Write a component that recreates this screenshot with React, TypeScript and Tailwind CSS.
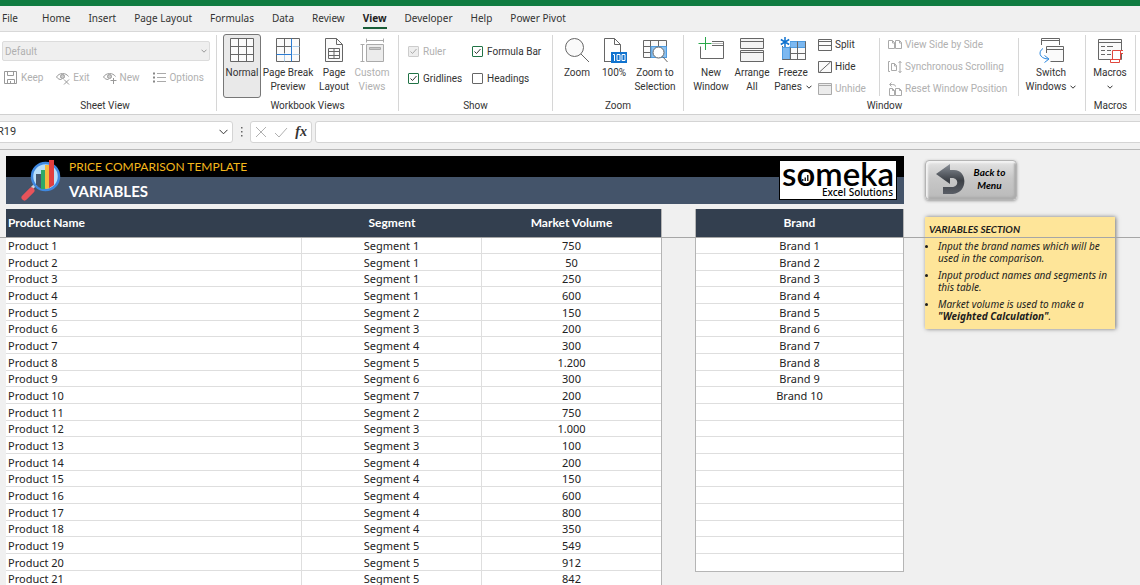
import React, { useState } from 'react';
import clsx from 'clsx';

const TABS = ['File', 'Home', 'Insert', 'Page Layout', 'Formulas', 'Data', 'Review', 'View', 'Developer', 'Help', 'Power Pivot'];

const PRODUCTS: [segment: number, volume: string][] = [
  [1, '750'], [1, '50'], [1, '250'], [1, '600'], [2, '150'], [3, '200'], [4, '300'],
  [5, '1.200'], [6, '300'], [7, '200'], [2, '750'], [3, '1.000'], [3, '100'], [4, '200'],
  [4, '150'], [4, '600'], [4, '800'], [4, '350'], [5, '549'], [5, '912'], [5, '842'],
];

const BRAND_ROWS = 20;
const BRANDS = Array.from({ length: 10 }, (_, i) => `Brand ${i + 1}`);

/* ── Icons ── */

function Icon({ w = 26, h = 26, children, className }: { w?: number; h?: number; children: React.ReactNode; className?: string }) {
  return (
    <svg width={w} height={h} viewBox={`0 0 ${w} ${h}`} fill="none" stroke="#666" className={clsx('shrink-0', className)} aria-hidden="true">
      {children}
    </svg>
  );
}

const Chevron = ({ className }: { className?: string }) => (
  <svg width="6" height="4" viewBox="0 0 6 4" fill="none" stroke="currentColor" className={clsx('inline-block', className)} aria-hidden="true">
    <path d="M.5.7 3 3.2 5.5.7" />
  </svg>
);

const NormalIcon = () => (
  <Icon>
    <path d="M1.5 1.5h23v23h-23zM9.5 1.5v23M17.5 1.5v23M1.5 9.5h23M1.5 17.5h23" fill="#fafafa" />
  </Icon>
);

const PageBreakIcon = () => (
  <Icon>
    <path d="M1.5 1.5h23v23h-23zM9.5 1.5v15M1.5 9.5h15" fill="#fafafa" />
    <path d="M17.5 9.5h7M17.5 17.5h7M9.5 17.5v7" stroke="#a9c9e6" />
    <path d="M16.5 1.5v23M1.5 17.5h15" stroke="#2b7cd3" />
  </Icon>
);

const PageLayoutIcon = () => (
  <Icon>
    <path d="M4.5 1.5h11l6 6v17h-17z" fill="#fafafa" />
    <path d="M15.5 1.5v6h6M7.5 11.5h11v10h-11zM7.5 14.5h11M7.5 18.5h11M13 11.5v10" />
  </Icon>
);

const CustomViewsIcon = () => (
  <Icon>
    <g stroke="#aaa">
      <path d="M7.5 7.5h17v17h-17z" fill="#ececec" />
      <path d="M10.5 10.5h11v2h-11z" fill="#c8c8c8" />
      <path d="M7.5 3.5h17M7.5 1.5v4M24.5 1.5v4M3.5 7.5v17M1.5 7.5h4M1.5 24.5h4" />
    </g>
  </Icon>
);

const ZoomIcon = () => (
  <Icon>
    <circle cx="10.5" cy="10.5" r="9" fill="#fafafa" />
    <path d="m17 17 8 8" />
  </Icon>
);

const Zoom100Icon = () => (
  <Icon>
    <path d="M3.5 25V1.5h10l6 6V15M3.5 24.5h7M13.5 1.5v6h6" />
    <rect x="10" y="15" width="16" height="11" fill="#1073cf" stroke="none" />
    <path d="M12 17.5h1.5v6.5M16 17.5h3v6h-3zM21 17.5h3v6h-3z" stroke="#fff" />
  </Icon>
);

const ZoomSelectionIcon = () => (
  <Icon>
    <path d="M1.5 3.5h23v17h-23zM8.5 3.5v17M16.5 3.5v17M1.5 9.5h23M1.5 15.5h23" fill="#fafafa" />
    <path d="M9 9.5h15.5v11H9z" fill="#8cc1f0" stroke="#4d9be0" />
    <circle cx="16.5" cy="15.5" r="5.5" fill="#fff" />
    <path d="m20.5 19.5 5 5.5" />
  </Icon>
);

const NewWindowIcon = () => (
  <Icon>
    <path d="M2.5 9.5v12h23v-17H14M14 8.5h11.5" />
    <path d="M14 6.5h11" stroke="#bbb" />
    <path d="M7.5 0v13M.5 6.5h13" stroke="#2aa84a" />
  </Icon>
);

const ArrangeIcon = () => (
  <Icon>
    <path d="M1.5 1.5h23v10h-23zM1.5 13.5h23v11h-23z" fill="#f4f4f4" />
    <path d="M1.5 4.5h23M1.5 15.5h23" />
  </Icon>
);

const FreezeIcon = () => (
  <Icon>
    <path d="M2.5 4.5h23v18h-23z" fill="#fafafa" />
    <path d="M10 4.5h15.5v6H10zM2.5 10.5H10v12H2.5z" fill="#7cb8f0" stroke="#4d9be0" />
    <path d="M10.5 10.5v12M17.5 4.5v18M10.5 16.5h15M2.5 22.5h23V4.5" />
    <path d="M0 0h10v9H0z" fill="#fff" stroke="none" />
    <path d="M5 0v10M.8 2.5l8.4 5M9.2 2.5l-8.4 5" stroke="#1073cf" strokeWidth="1.5" />
  </Icon>
);

const SwitchIcon = () => (
  <Icon>
    <path d="M3.5 8V1.5h18V8M3.5 3.5h18" />
    <path d="M8.5 9.5h17v15h-17z" fill="#fafafa" stroke="none" />
    <path d="M8.5 16V9.5h17v15h-13M8.5 12.5h17" />
    <path d="M5 11.5c-5 3-4 10 5 10.5M6.5 18.5 11 22l-4.5 3.5" stroke="#2b88e0" />
  </Icon>
);

const MacrosIcon = () => (
  <Icon>
    <path d="M1.5 2.5h23v20h-23z" fill="#fafafa" />
    <path d="M1.5 5.5h23M4 9.5h4M10 9.5h6M4 13.5h4M10 13.5h4M4 17.5h4M10 17.5h4" />
    <path d="M15.5 13.5h8v9h-8zM13.5 22.5h9v3h-9zM23.5 13.5h3v3h-3" fill="#fff" stroke="#e0473e" />
  </Icon>
);

const SaveIcon = () => (
  <Icon w={14} h={14}>
    <path d="M.5.5h12v12H.5zM3.5.5v4h6v-4M3.5 12.5v-4h7v4M6.5 10v2.5" stroke="#999" />
  </Icon>
);

const EyeIcon = ({ plus }: { plus?: boolean }) => (
  <Icon w={14} h={14}>
    <g stroke="#999">
      <path d="M.5 6C3 1.5 10 1.5 12.5 5.5M.5 6C2 8 3.5 8.5 5.5 8.5" />
      <circle cx="6.5" cy="5.5" r="2" fill="#ccc" />
      <path d={plus ? 'M10.5 7v6M7.5 9.5h6' : 'm8 8.5 5 5M13 8.5l-5 5'} />
    </g>
  </Icon>
);

const OptionsIcon = () => (
  <Icon w={14} h={14}>
    <path d="M1 2.5h2M1 6.5h2M1 10.5h2" stroke="#888" strokeWidth="2" />
    <path d="M5 2.5h9M5 6.5h9M5 10.5h9" stroke="#aaa" />
  </Icon>
);

const SplitIcon = () => (
  <Icon w={14} h={14}>
    <path d="M.5 1.5h13v11H.5zM.5 3.5h13M.5 7.5h13" fill="#fafafa" />
  </Icon>
);

const HideIcon = () => (
  <Icon w={14} h={14}>
    <path d="M.5 1.5h13v11H.5zM1.5 12 12.5 2" fill="#fafafa" />
  </Icon>
);

const UnhideIcon = () => (
  <Icon w={14} h={14}>
    <path d="M.5 1.5h13v11H.5zM.5 3.5h13" fill="#ececec" stroke="#aaa" />
  </Icon>
);

const SideBySideIcon = () => (
  <Icon w={14} h={14}>
    <path d="M.5 2.5h4l2 2v6h-6zM7.5 2.5h4l2 2v6h-6zM4.5 2.5V5h2M11.5 2.5V5h2" stroke="#aaa" />
  </Icon>
);

const SyncScrollIcon = () => (
  <Icon w={14} h={14}>
    <path d="M2 1.5H.5v10H2M3.5 3.5h3l2 2v5h-5zM6.5 3.5V6h2M12 1v12M10.5 3 12 1.5 13.5 3M10.5 11l1.5 1.5 1.5-1.5" stroke="#aaa" />
  </Icon>
);

const ResetPositionIcon = () => (
  <Icon w={14} h={14}>
    <path d="M1.5 6.5h3l2 2v5h-5zM7.5 6.500h4l2 2v5h-6zM4.5 6.5v2h2M11.5 6.5v2h2M7.5 4.5c0-2-2-2-5.5-2M3.5.5l-2 2 2 2" stroke="#aaa" />
  </Icon>
);

/* ── Ribbon pieces ── */

function Group({ label, className, inset, children }: { label: string; className?: string; inset?: boolean; children: React.ReactNode }) {
  return (
    <section aria-label={label} className={clsx('flex shrink-0 flex-col border-r border-[#d6d6d6]', className)}>
      <div className={clsx('flex flex-1', inset && 'pl-[6px]')}>{children}</div>
      <p className="text-center leading-[10px]">{label}</p>
    </section>
  );
}

interface BigButtonProps {
  icon: React.ReactNode;
  lines: string[];
  width: string;
  active?: boolean;
  disabled?: boolean;
  menu?: boolean;
}

function BigButton({ icon, lines, width, active, disabled, menu }: BigButtonProps) {
  return (
    <button
      type="button"
      disabled={disabled}
      className={clsx(
        '-mt-px flex h-16 flex-col items-center rounded-[3px] border pt-[2px] leading-[14px] whitespace-nowrap',
        width,
        active ? 'border-[#777] bg-[#e9e9e9]' : 'border-transparent',
        disabled && 'text-[#b0b0b0]',
      )}
    >
      {icon}
      <span className="mt-[3px]">{lines[0]}</span>
      <span className="flex h-[14px] items-center gap-1">
        {lines[1]}
        {menu && <Chevron />}
      </span>
    </button>
  );
}

function SmallButton({ icon, label, disabled }: { icon: React.ReactNode; label: string; disabled?: boolean }) {
  return (
    <button type="button" disabled={disabled} className={clsx('flex items-center gap-[3px] leading-[14px] whitespace-nowrap', disabled && 'text-[#b0b0b0]')}>
      {icon}
      {label}
    </button>
  );
}

function CheckField({ label, defaultChecked, disabled }: { label: string; defaultChecked?: boolean; disabled?: boolean }) {
  const [checked, setChecked] = useState(!!defaultChecked);
  return (
    <label className={clsx('flex items-center gap-1 whitespace-nowrap', disabled && 'text-[#b0b0b0]')}>
      <span className="grid">
        <input
          type="checkbox"
          checked={checked}
          disabled={disabled}
          onChange={e => setChecked(e.target.checked)}
          className={clsx(
            'col-start-1 row-start-1 size-[11px] appearance-none rounded-[1px] border',
            disabled ? 'border-[#ccc] bg-[#eee]' : checked ? 'border-[#217346] bg-white' : 'border-[#666] bg-white',
          )}
        />
        {checked && (
          <svg width="11" height="11" viewBox="0 0 11 11" fill="none" stroke={disabled ? '#aaa' : '#333'} className="pointer-events-none col-start-1 row-start-1">
            <path d="m2.5 5.5 2 2 4-4.5" />
          </svg>
        )}
      </span>
      {label}
    </label>
  );
}

function Ribbon() {
  return (
    <div className="flex h-[83px] overflow-hidden border-b border-[#d0d0d0] bg-white py-[3px] text-[10px] text-[#333]">
      <Group label="Sheet View" className="-ml-[6px] w-[223px]" inset>
        <div className="flex w-full flex-col pt-[6px] pr-[6px] pl-[2px]">
          <div className="grid items-center">
            <select
              disabled
              aria-label="Sheet view"
              className="col-start-1 row-start-1 h-5 w-full appearance-none rounded-[2px] border border-[#dcdcdc] bg-[#efefef] px-[2px] text-[#b0b0b0] opacity-100"
            >
              <option>Default</option>
            </select>
            <Chevron className="pointer-events-none col-start-1 row-start-1 mr-[3px] justify-self-end text-[#999]" />
          </div>
          <div className="mt-[10px] flex justify-between pr-[6px] pl-[2px]">
            <SmallButton icon={<SaveIcon />} label="Keep" disabled />
            <SmallButton icon={<EyeIcon />} label="Exit" disabled />
            <SmallButton icon={<EyeIcon plus />} label="New" disabled />
            <SmallButton icon={<OptionsIcon />} label="Options" disabled />
          </div>
        </div>
      </Group>

      <Group label="Workbook Views" className="w-[182px]" inset>
        <BigButton icon={<NormalIcon />} lines={['Normal']} width="w-[38px]" active />
        <BigButton icon={<PageBreakIcon />} lines={['Page Break', 'Preview']} width="w-[54px]" />
        <BigButton icon={<PageLayoutIcon />} lines={['Page', 'Layout']} width="w-[38px]" />
        <BigButton icon={<CustomViewsIcon />} lines={['Custom', 'Views']} width="w-[38px]" disabled />
      </Group>

      <Group label="Show" className="w-[154px]">
        <div className="grid w-full grid-cols-[64px_1fr] grid-rows-[26px_28px] content-start items-center pt-[3px] pl-[9px]">
          <CheckField label="Ruler" defaultChecked disabled />
          <CheckField label="Formula Bar" defaultChecked />
          <CheckField label="Gridlines" defaultChecked />
          <CheckField label="Headings" />
        </div>
      </Group>

      <Group label="Zoom" className="w-[131px]" inset>
        <BigButton icon={<ZoomIcon />} lines={['Zoom']} width="w-9" />
        <BigButton icon={<Zoom100Icon />} lines={['100%']} width="w-[38px]" />
        <BigButton icon={<ZoomSelectionIcon />} lines={['Zoom to', 'Selection']} width="w-11" />
      </Group>

      <Group label="Window" className="w-[402px]" inset>
        <BigButton icon={<NewWindowIcon />} lines={['New', 'Window']} width="w-[42px]" />
        <BigButton icon={<ArrangeIcon />} lines={['Arrange', 'All']} width="w-10" />
        <BigButton icon={<FreezeIcon />} lines={['Freeze', 'Panes']} width="w-[42px]" menu />
        <div className="my-[3px] grid h-[58px] w-[66px] content-between border-r border-[#d6d6d6] pl-1">
          <SmallButton icon={<SplitIcon />} label="Split" />
          <SmallButton icon={<HideIcon />} label="Hide" />
          <SmallButton icon={<UnhideIcon />} label="Unhide" disabled />
        </div>
        <div className="my-[3px] grid h-[58px] w-[139px] content-between border-r border-[#d6d6d6] pl-2">
          <SmallButton icon={<SideBySideIcon />} label="View Side by Side" disabled />
          <SmallButton icon={<SyncScrollIcon />} label="Synchronous Scrolling" disabled />
          <SmallButton icon={<ResetPositionIcon />} label="Reset Window Position" disabled />
        </div>
        <BigButton icon={<SwitchIcon />} lines={['Switch', 'Windows']} width="w-16" menu />
      </Group>

      <Group label="Macros" className="w-[50px]">
        <BigButton icon={<MacrosIcon />} lines={['Macros']} width="w-12" menu />
      </Group>
    </div>
  );
}

function FormulaBar() {
  return (
    <div className="flex h-[35px] items-center border-b border-[#b8b8b8] bg-[#f0f0f0] text-[11px]">
      <div className="-ml-2 flex h-[22px] w-[241px] items-center rounded-[3px] border border-[#d4d4d4] bg-white px-1">
        <input aria-label="Name box" defaultValue="R19" className="min-w-0 flex-1 text-[#333] outline-none" />
        <svg width="9" height="6" viewBox="0 0 9 6" fill="none" stroke="#333">
          <path d="m.5.8 4 4 4-4" />
        </svg>
      </div>
      <svg width="17" height="10" viewBox="0 0 17 10" fill="#666">
        <path d="M8 0h1.5v1.5H8zM8 4h1.5v1.5H8zM8 8h1.5v1.5H8z" />
      </svg>
      <div className="flex h-[22px] w-[62px] items-center justify-between rounded-[3px] border border-[#d4d4d4] bg-white px-1">
        <button type="button" aria-label="Cancel" disabled>
          <svg width="12" height="12" viewBox="0 0 12 12" fill="none" stroke="#b0b0b0">
            <path d="m1 1 10 10M11 1 1 11" />
          </svg>
        </button>
        <button type="button" aria-label="Enter" disabled>
          <svg width="14" height="12" viewBox="0 0 14 12" fill="none" stroke="#b0b0b0">
            <path d="m1 7 4 4 8-9" />
          </svg>
        </button>
        <button type="button" className="font-['Liberation_Serif',serif] text-[14px] leading-[18px] font-bold text-[#333] italic">
          fx
        </button>
      </div>
      <input aria-label="Formula" className="-mr-1 ml-[3px] h-[22px] min-w-0 flex-1 rounded-[3px] border border-[#d4d4d4] bg-white px-2 outline-none" />
    </div>
  );
}

/* ── Worksheet ── */

function ChartLens() {
  return (
    <svg width="40" height="42" viewBox="0 0 40 42" className="shrink-0" aria-hidden="true">
      <path d="m11 29 4-4" stroke="#c9d3dc" strokeWidth="3" />
      <path d="m3.5 38.5 7-7" stroke="#e8535a" strokeWidth="6" strokeLinecap="round" />
      <circle cx="24.5" cy="17.5" r="13.5" fill="#b9def8" stroke="#3f88e0" strokeWidth="2.5" />
      <path d="M15 15h5v14.500a13 13 0 0 1-5-4z" fill="#46566b" />
      <path d="M20 11h5v19h-5z" fill="#2fa968" />
      <path d="M24 6h5v23l-5 1z" fill="#f6b93f" />
      <path d="M28 1h5v25l-5 3z" fill="#e23f3f" />
    </svg>
  );
}

function SomekaLogo() {
  return (
    <div className="flex h-10 w-[118px] flex-col border border-black bg-white text-black">
      <span className="relative block text-center font-['Lato',sans-serif] text-[33px] leading-[24px] font-semibold">
        someka
        <svg width="8" height="7" viewBox="0 0 8 7" className="absolute top-[13px] left-[22px]" aria-hidden="true">
          <path d="M0 5h1.5v2H0zM2.5 3.500H4V7H2.5zM5 1h1.5v6H5z" fill="#222" />
        </svg>
      </span>
      <span className="pr-[3px] text-right font-['Noto_Sans',sans-serif] text-[10px] leading-[14px] font-medium">Excel Solutions</span>
    </div>
  );
}

function Banner() {
  return (
    <header className="flex h-12 bg-[linear-gradient(#000_0_21px,#44546a_21px)] pr-[7px] pl-[15px]">
      <div className="pt-[3px]">
        <ChartLens />
      </div>
      <div className="flex-1 pl-2">
        <p className="text-[12px] leading-[22px] text-[#f5b81c]">PRICE COMPARISON TEMPLATE</p>
        <h1 className="text-[15px] leading-[27px] font-bold text-white">VARIABLES</h1>
      </div>
      <div className="pt-1">
        <SomekaLogo />
      </div>
    </header>
  );
}

// two 17px rows to one 16px row keeps the sheet's average row height
const ROW = 'h-[17px] nth-[3n]:h-4';
const CELL = "border-b border-[#dedede] p-0 font-['Noto_Sans',sans-serif] text-[11px] leading-[15px]";
const HEAD = 'h-7 bg-[#333f4f] p-0 font-bold text-white';

function ProductTable() {
  return (
    <table className="w-full table-fixed border-separate border-spacing-0 self-start border-r border-[#b5b5b5] bg-white">
      <colgroup>
        <col />
        <col className="w-[180px]" />
        <col className="w-[179px]" />
      </colgroup>
      <thead>
        <tr>
          <th className={clsx(HEAD, 'pl-[2px] text-left')}>Product Name</th>
          <th className={HEAD}>Segment</th>
          <th className={HEAD}>Market Volume</th>
        </tr>
      </thead>
      <tbody>
        {PRODUCTS.map(([segment, volume], i) => (
          <tr key={i} className={ROW}>
            <td className={clsx(CELL, 'border-r pl-[2px]')}>Product {i + 1}</td>
            <td className={clsx(CELL, 'border-r text-center')}>Segment {segment}</td>
            <td className={clsx(CELL, 'text-center')}>{volume}</td>
          </tr>
        ))}
      </tbody>
    </table>
  );
}

function BrandTable() {
  return (
    <table className="w-[209px] shrink-0 table-fixed border-separate border-spacing-0 self-start border border-t-0 border-[#b5b5b5] bg-white">
      <thead>
        <tr>
          <th className={HEAD}>Brand</th>
        </tr>
      </thead>
      <tbody>
        {Array.from({ length: BRAND_ROWS }, (_, i) => (
          <tr key={i} className={ROW}>
            <td className={clsx(CELL, 'text-center', i === BRAND_ROWS - 1 && 'border-b-0')}>{BRANDS[i]}</td>
          </tr>
        ))}
      </tbody>
    </table>
  );
}

function SidePanel() {
  return (
    <aside className="w-[236px] shrink-0 pt-1 pl-[21px] text-[10px] text-[#1c1c1c] italic">
      <button
        type="button"
        className="flex h-10 w-[92px] items-center rounded-[4px] border border-[#b4b4b4] bg-[linear-gradient(#e4e4e4,#c8c8c8_45%,#bababa)] pr-1 pb-[2px] pl-[9px] leading-[13px] font-bold text-black italic shadow-[inset_2px_2px_2px_#f4f4f4,inset_-2px_-2px_2px_#acacac,0_1px_3px_#999]"
      >
        <svg width="32" height="32" viewBox="0 0 32 32" aria-hidden="true">
          <defs>
            <linearGradient id="arrow" x1="0" y1="0" x2="0" y2="1">
              <stop offset="0" stopColor="#8a9098" />
              <stop offset="0.55" stopColor="#3c4046" />
              <stop offset="1" stopColor="#5a5e66" />
            </linearGradient>
          </defs>
          <path d="M1 11 15 1v6h4c14 0 14 23-1 24H8v-7h9c7 0 7-9 0-9h-2v6z" fill="url(#arrow)" />
        </svg>
        <span className="flex-1 text-center">
          Back to
          <br />
          Menu
        </span>
      </button>

      <div className="mt-[17px] w-[190px] bg-[#fee599] pt-[6px] pr-1 pb-[7px] pl-1 leading-[12px] shadow-[1px_0_4px_#777]">
        <h2 className="font-bold">VARIABLES SECTION</h2>
        <ul className="mt-[5px] list-disc space-y-[5px] pl-[9px] font-['Noto_Sans',sans-serif] marker:text-[8px]">
          <li>Input the brand names which will be used in the comparison.</li>
          <li>Input product names and segments in this table.</li>
          <li>
            Market volume is used to make a <strong>"Weighted Calculation"</strong>.
          </li>
        </ul>
      </div>
    </aside>
  );
}

export default function App() {
  return (
    <div className="flex h-screen flex-col overflow-hidden bg-[#f0f0f0] font-['Roboto','Noto_Sans',sans-serif]">
      <div className="h-[6px] shrink-0 bg-[#107c41]" />

      <nav className="flex h-[26px] shrink-0 border-b border-[#d8d8d8] font-['Noto_Sans',sans-serif] text-[10px] text-[#333]">
        {TABS.map(tab => (
          <button key={tab} type="button" className="px-[9px] whitespace-nowrap first:mr-[6px] first:pl-[2px]">
            <span className={clsx('block border-b-2 pt-px leading-[18px]', tab === 'View' ? 'border-[#185c37] font-bold text-[#222]' : 'border-transparent')}>
              {tab}
            </span>
          </button>
        ))}
      </nav>

      <div className="shrink-0">
        <Ribbon />
        <FormulaBar />
      </div>

      <main className="relative flex min-h-0 flex-1 overflow-hidden pt-[6px] pl-[6px] font-['Lato',sans-serif] text-[12px] text-[#222]">
        <div className="min-w-0 flex-1">
          <Banner />
          <div className="mt-[5px] flex gap-[33px]">
            <ProductTable />
            <BrandTable />
          </div>
        </div>
        <SidePanel />
        {/* frozen pane edge */}
        <div className="pointer-events-none absolute inset-x-0 top-[87px] h-px bg-[#a6a6a6]" />
      </main>
    </div>
  );
}
